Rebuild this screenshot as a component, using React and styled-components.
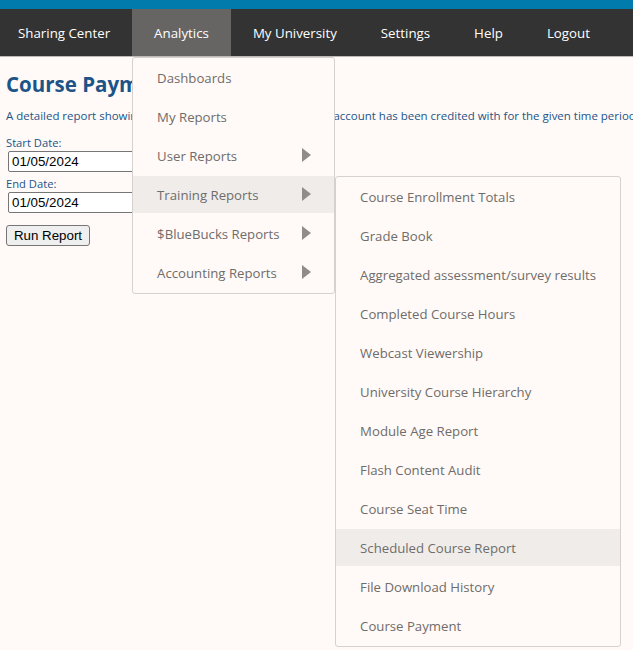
import React from "react";
import styled, { createGlobalStyle } from "styled-components";

const navItems = ["Sharing Center", "Analytics", "My University", "Settings", "Help", "Logout"];
const mainMenu = [
  { label: "Dashboards" },
  { label: "My Reports" },
  { label: "User Reports", more: true },
  { label: "Training Reports", more: true, active: true },
  { label: "$BlueBucks Reports", more: true },
  { label: "Accounting Reports", more: true },
];
const trainingMenu = [
  "Course Enrollment Totals",
  "Grade Book",
  "Aggregated assessment/survey results",
  "Completed Course Hours",
  "Webcast Viewership",
  "University Course Hierarchy",
  "Module Age Report",
  "Flash Content Audit",
  "Course Seat Time",
  "Scheduled Course Report",
  "File Download History",
  "Course Payment",
];

export default function App() {
  return (
    <>
      <GlobalStyle />
      <TopStrip />
      <Nav>
        {navItems.map((item) => (
          <NavItem key={item} $open={item === "Analytics"}>
            {item}
            {item === "Analytics" && (
              <Menu>
                {mainMenu.map((row) => (
                  <MenuRow key={row.label} $active={row.active}>
                    {row.label}
                    {row.more && <Arrow />}
                    {row.active && (
                      <SubMenu>
                        {trainingMenu.map((sub) => (
                          <MenuRow key={sub} $active={sub === "Scheduled Course Report"}>
                            {sub}
                          </MenuRow>
                        ))}
                      </SubMenu>
                    )}
                  </MenuRow>
                ))}
              </Menu>
            )}
          </NavItem>
        ))}
      </Nav>
      <Content>
        <Title>Course Payment</Title>
        <Description>
          A detailed report showing the full course payments that your account has been credited with for the given time period.
        </Description>
        <Field>
          <FieldLabel>Start Date:</FieldLabel>
          <DateInput defaultValue="01/05/2024" />
        </Field>
        <Field>
          <FieldLabel>End Date:</FieldLabel>
          <DateInput defaultValue="01/05/2024" />
        </Field>
        <RunButton>Run Report</RunButton>
      </Content>
    </>
  );
}

const GlobalStyle = createGlobalStyle`
  html, body {
    margin: 0;
    height: 650px;
    overflow: hidden;
    background: #fffaf7;
    font-family: "Open Sans", "Noto Sans", sans-serif;
  }
`;

const TopStrip = styled.div`
  height: 9px;
  background: #007bac;
`;

const Nav = styled.nav`
  display: flex;
  height: 47px;
  padding-left: 18px;
  background: #333333;
  border-bottom: 1px solid #bdb9b7;
`;

const NavItem = styled.div`
  position: relative;
  display: flex;
  align-items: center;
  flex: none;
  padding: 0 22px;
  background: ${({ $open }) => ($open ? "#666564" : "transparent")};
  color: #ffffff;
  font-size: 13.3px;
  white-space: nowrap;
  &:first-child {
    padding: 0 22px 0 0;
  }
`;

const Menu = styled.div`
  position: absolute;
  top: 48px;
  left: 0;
  width: 201px;
  padding-top: 1px;
  background: #fffaf7;
  border: 1px solid #d6d1ce;
  border-radius: 3px;
  z-index: 2;
`;

const SubMenu = styled(Menu)`
  top: 0;
  left: 202px;
  width: 284px;
  cursor: default;
`;

const MenuRow = styled.div`
  position: relative;
  display: flex;
  align-items: center;
  height: 37px;
  margin-bottom: 2px;
  padding-left: 24px;
  background: ${({ $active }) => ($active ? "#f0ecea" : "transparent")};
  color: #6f6c6a;
  font-size: 13.2px;
`;

const Arrow = styled.span`
  position: absolute;
  right: 23px;
  top: 11px;
  width: 0;
  height: 0;
  border-top: 7px solid transparent;
  border-bottom: 7px solid transparent;
  border-left: 9px solid #8f8c8a;
`;

const Content = styled.main`
  padding: 0 6px;
  color: #1c5488;
`;

const Title = styled.h1`
  margin: 13px 0 0;
  font-size: 20.5px;
  line-height: 29px;
  font-weight: 700;
  white-space: nowrap;
`;

const Description = styled.p`
  margin: 9px 0 0;
  font-size: 11.47px;
  line-height: 16px;
  white-space: nowrap;
`;

const Field = styled.div`
  display: flex;
  flex-direction: column;
  align-items: flex-start;
  &:first-of-type {
    margin-top: 11px;
  }
`;

const FieldLabel = styled.label`
  font-size: 11.2px;
  line-height: 16px;
`;

const DateInput = styled.input`
  box-sizing: border-box;
  width: 150px;
  height: 21px;
  margin: 0 0 4px 2px;
  padding: 0 3px;
  border: 1px solid #767676;
  border-radius: 2px;
  background: #fff;
  color: #000;
  font: 13.33px "Liberation Sans", Arial, sans-serif;
`;

const RunButton = styled.button`
  display: block;
  box-sizing: border-box;
  width: 84px;
  height: 21px;
  margin-top: 8px;
  padding: 0;
  border: 1px solid #767676;
  border-radius: 3px;
  background: #efefef;
  color: #000;
  font: 13.33px "Liberation Sans", Arial, sans-serif;
`;
